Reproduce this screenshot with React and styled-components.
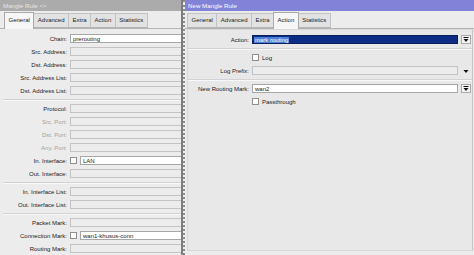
import React from 'react';
import styled, { createGlobalStyle } from 'styled-components';

const Global = createGlobalStyle`
  html, body {
    margin: 0;
    padding: 0;
    overflow: hidden;
  }
  body {
    font-family: 'Liberation Sans', Arial, sans-serif;
    font-size: 6px;
    color: #1a1a1a;
  }
`;

const Screen = styled.div`
  display: flex;
  width: 474px;
  height: 255px;
  overflow: hidden;
  background: #ececec;
`;

const Window = styled.div`
  display: flex;
  flex-direction: column;
  width: ${({ $width }) => $width}px;
  flex-shrink: 0;
  overflow: hidden;
  background: #ececec;
  border-left: ${({ $frame }) => ($frame ? '2px dotted #8c8c8c' : 'none')};
  border-right: ${({ $divider }) => ($divider ? '2px solid #7d7d7d' : 'none')};
`;

const TitleBar = styled.div`
  height: 11px;
  line-height: 11px;
  padding-left: 3px;
  font-size: 6.2px;
  background: ${({ $bg }) => $bg};
  color: ${({ $fg }) => $fg};
  white-space: nowrap;
`;

const TabBar = styled.div`
  display: flex;
  align-items: flex-end;
  height: 17px;
  padding-left: ${({ $pad }) => $pad}px;
  border-bottom: 1px solid #b4b4b4;
`;

const Tab = styled.div`
  height: ${({ $active }) => ($active ? 16 : 13)}px;
  line-height: ${({ $active }) => ($active ? 15 : 13)}px;
  padding: 0 3.5px;
  margin-bottom: ${({ $active }) => ($active ? -1 : 0)}px;
  background: ${({ $active }) => ($active ? '#f6f6f6' : '#e2e2e2')};
  border: 1px solid ${({ $active }) => ($active ? '#a9a9a9' : '#c2c2c2')};
  border-bottom: ${({ $active }) => ($active ? 'none' : '1px solid #b4b4b4')};
  margin-right: -1px;
  white-space: nowrap;
  position: relative;
  z-index: ${({ $active }) => ($active ? 1 : 0)};
`;

const Panel = styled.div`
  flex: 1;
  display: flex;
  flex-direction: column;
  padding-top: 3px;
  min-width: ${({ $minWidth }) => $minWidth || 0}px;
  margin: ${({ $margin }) => $margin};
  background: ${({ $bg }) => $bg || '#ececec'};
  border: ${({ $border }) => ($border ? '1px solid #d8d8d8' : 'none')};
  border-right: ${({ $border }) => ($border ? '1px solid #c4c4c4' : 'none')};
`;

const Row = styled.div`
  display: grid;
  grid-template-columns: ${({ $label }) => $label}px 1fr auto;
  align-items: center;
  column-gap: 3px;
  height: 13px;
  padding-right: ${({ $right }) => $right || 0}px;
`;

const Label = styled.div`
  text-align: right;
  white-space: nowrap;
  color: ${({ $dim }) => ($dim ? '#a2a2a2' : '#222')};
`;

const FieldGroup = styled.div`
  display: flex;
  align-items: center;
  gap: 3px;
  min-width: 0;
`;

const Field = styled.div`
  flex: 1;
  height: 9px;
  line-height: 9px;
  padding-left: 2px;
  box-sizing: border-box;
  border: 1px solid ${({ $white }) => ($white ? '#a7a7a7' : '#c3c3c3')};
  background: ${({ $white }) => ($white ? '#ffffff' : '#ececec')};
  white-space: nowrap;
  overflow: hidden;
`;

const SelectedField = styled(Field)`
  background: #0c2c86;
  border-color: #0a1f5e;
  color: #fff;
  padding-left: 1px;
`;

const Highlight = styled.span`
  background: #4d7fd6;
  padding: 0 1px;
`;

const Check = styled.span`
  display: inline-block;
  width: 7px;
  height: 7px;
  box-sizing: border-box;
  border: 1px solid #8f8f8f;
  background: #fff;
  flex-shrink: 0;
`;

const CheckLabel = styled.label`
  display: flex;
  align-items: center;
  gap: 3px;
`;

const DropButton = styled.div`
  width: 10px;
  height: 9px;
  box-sizing: border-box;
  border: 1px solid #a9a9a9;
  background: #f3f3f3;
  display: flex;
  align-items: center;
  justify-content: center;
`;

const Arrow = styled.div`
  width: 10px;
  display: flex;
  justify-content: center;
`;

const Separator = styled.div`
  height: 5px;
  display: flex;
  align-items: center;
  &::after {
    content: '';
    flex: 1;
    height: 1px;
    background: #d2d2d2;
    box-shadow: 0 1px 0 #f8f8f8;
  }
`;

const DropIcon = ({ bar }) => (
  <svg width="6" height="6" viewBox="0 0 6 6">
    {bar && <rect x="0.5" y="0" width="5" height="1" fill="#111" />}
    <path d="M0.5 2 L5.5 2 L3 5 Z" fill="#111" />
  </svg>
);

const leftRows = [
  [{ label: 'Chain:', value: 'prerouting', white: true }, { label: 'Src. Address:' }, { label: 'Dst. Address:' }, { label: 'Src. Address List:' }, { label: 'Dst. Address List:' }],
  [
    { label: 'Protocol:' },
    { label: 'Src. Port:', dim: true },
    { label: 'Dst. Port:', dim: true },
    { label: 'Any. Port:', dim: true },
    { label: 'In. Interface:', value: 'LAN', white: true, check: true },
    { label: 'Out. Interface:' },
  ],
  [{ label: 'In. Interface List:' }, { label: 'Out. Interface List:' }],
  [{ label: 'Packet Mark:' }, { label: 'Connection Mark:', value: 'wan1-khusus-conn', white: true, check: true }, { label: 'Routing Mark:' }],
];

const LeftWindow = () => (
  <Window $width={181} $divider>
    <TitleBar $bg="#ababab" $fg="#e4e4e4">Mangle Rule &lt;&gt;</TitleBar>
    <TabBar $pad={4}>
      <Tab $active>General</Tab>
      <Tab>Advanced</Tab>
      <Tab>Extra</Tab>
      <Tab>Action</Tab>
      <Tab>Statistics</Tab>
    </TabBar>
    <Panel $minWidth={260} $margin="0 0 0 3px">
      {leftRows.map((group, gi) => (
        <React.Fragment key={gi}>
          {gi > 0 && <Separator />}
          {group.map(r => (
            <Row key={r.label} $label={64}>
              <Label $dim={r.dim}>{r.label}</Label>
              <FieldGroup>
                {r.check && <Check />}
                <Field $white={r.white}>{r.value}</Field>
              </FieldGroup>
              <span />
            </Row>
          ))}
        </React.Fragment>
      ))}
    </Panel>
  </Window>
);

const RightWindow = () => (
  <Window $width={291} $frame>
    <TitleBar $bg="#8282d8" $fg="#ffffff">New Mangle Rule</TitleBar>
    <TabBar $pad={2}>
      <Tab>General</Tab>
      <Tab>Advanced</Tab>
      <Tab>Extra</Tab>
      <Tab $active>Action</Tab>
      <Tab>Statistics</Tab>
    </TabBar>
    <Panel $bg="#e8e8e8" $border $margin="0 3px 4px 2px">
      <Row $label={61} $right={1}>
        <Label>Action:</Label>
        <SelectedField>
          <Highlight>mark routing</Highlight>
        </SelectedField>
        <DropButton>
          <DropIcon bar />
        </DropButton>
      </Row>
      <Separator />
      <Row $label={61} $right={1}>
        <span />
        <CheckLabel>
          <Check />
          Log
        </CheckLabel>
        <span />
      </Row>
      <Row $label={61} $right={1}>
        <Label>Log Prefix:</Label>
        <Field />
        <Arrow>
          <DropIcon />
        </Arrow>
      </Row>
      <Separator />
      <Row $label={61} $right={1}>
        <Label>New Routing Mark:</Label>
        <Field $white>wan2</Field>
        <DropButton>
          <DropIcon bar />
        </DropButton>
      </Row>
      <Row $label={61} $right={1}>
        <span />
        <CheckLabel>
          <Check />
          Passthrough
        </CheckLabel>
        <span />
      </Row>
    </Panel>
  </Window>
);

export default () => (
  <>
    <Global />
    <Screen>
      <LeftWindow />
      <RightWindow />
    </Screen>
  </>
);
